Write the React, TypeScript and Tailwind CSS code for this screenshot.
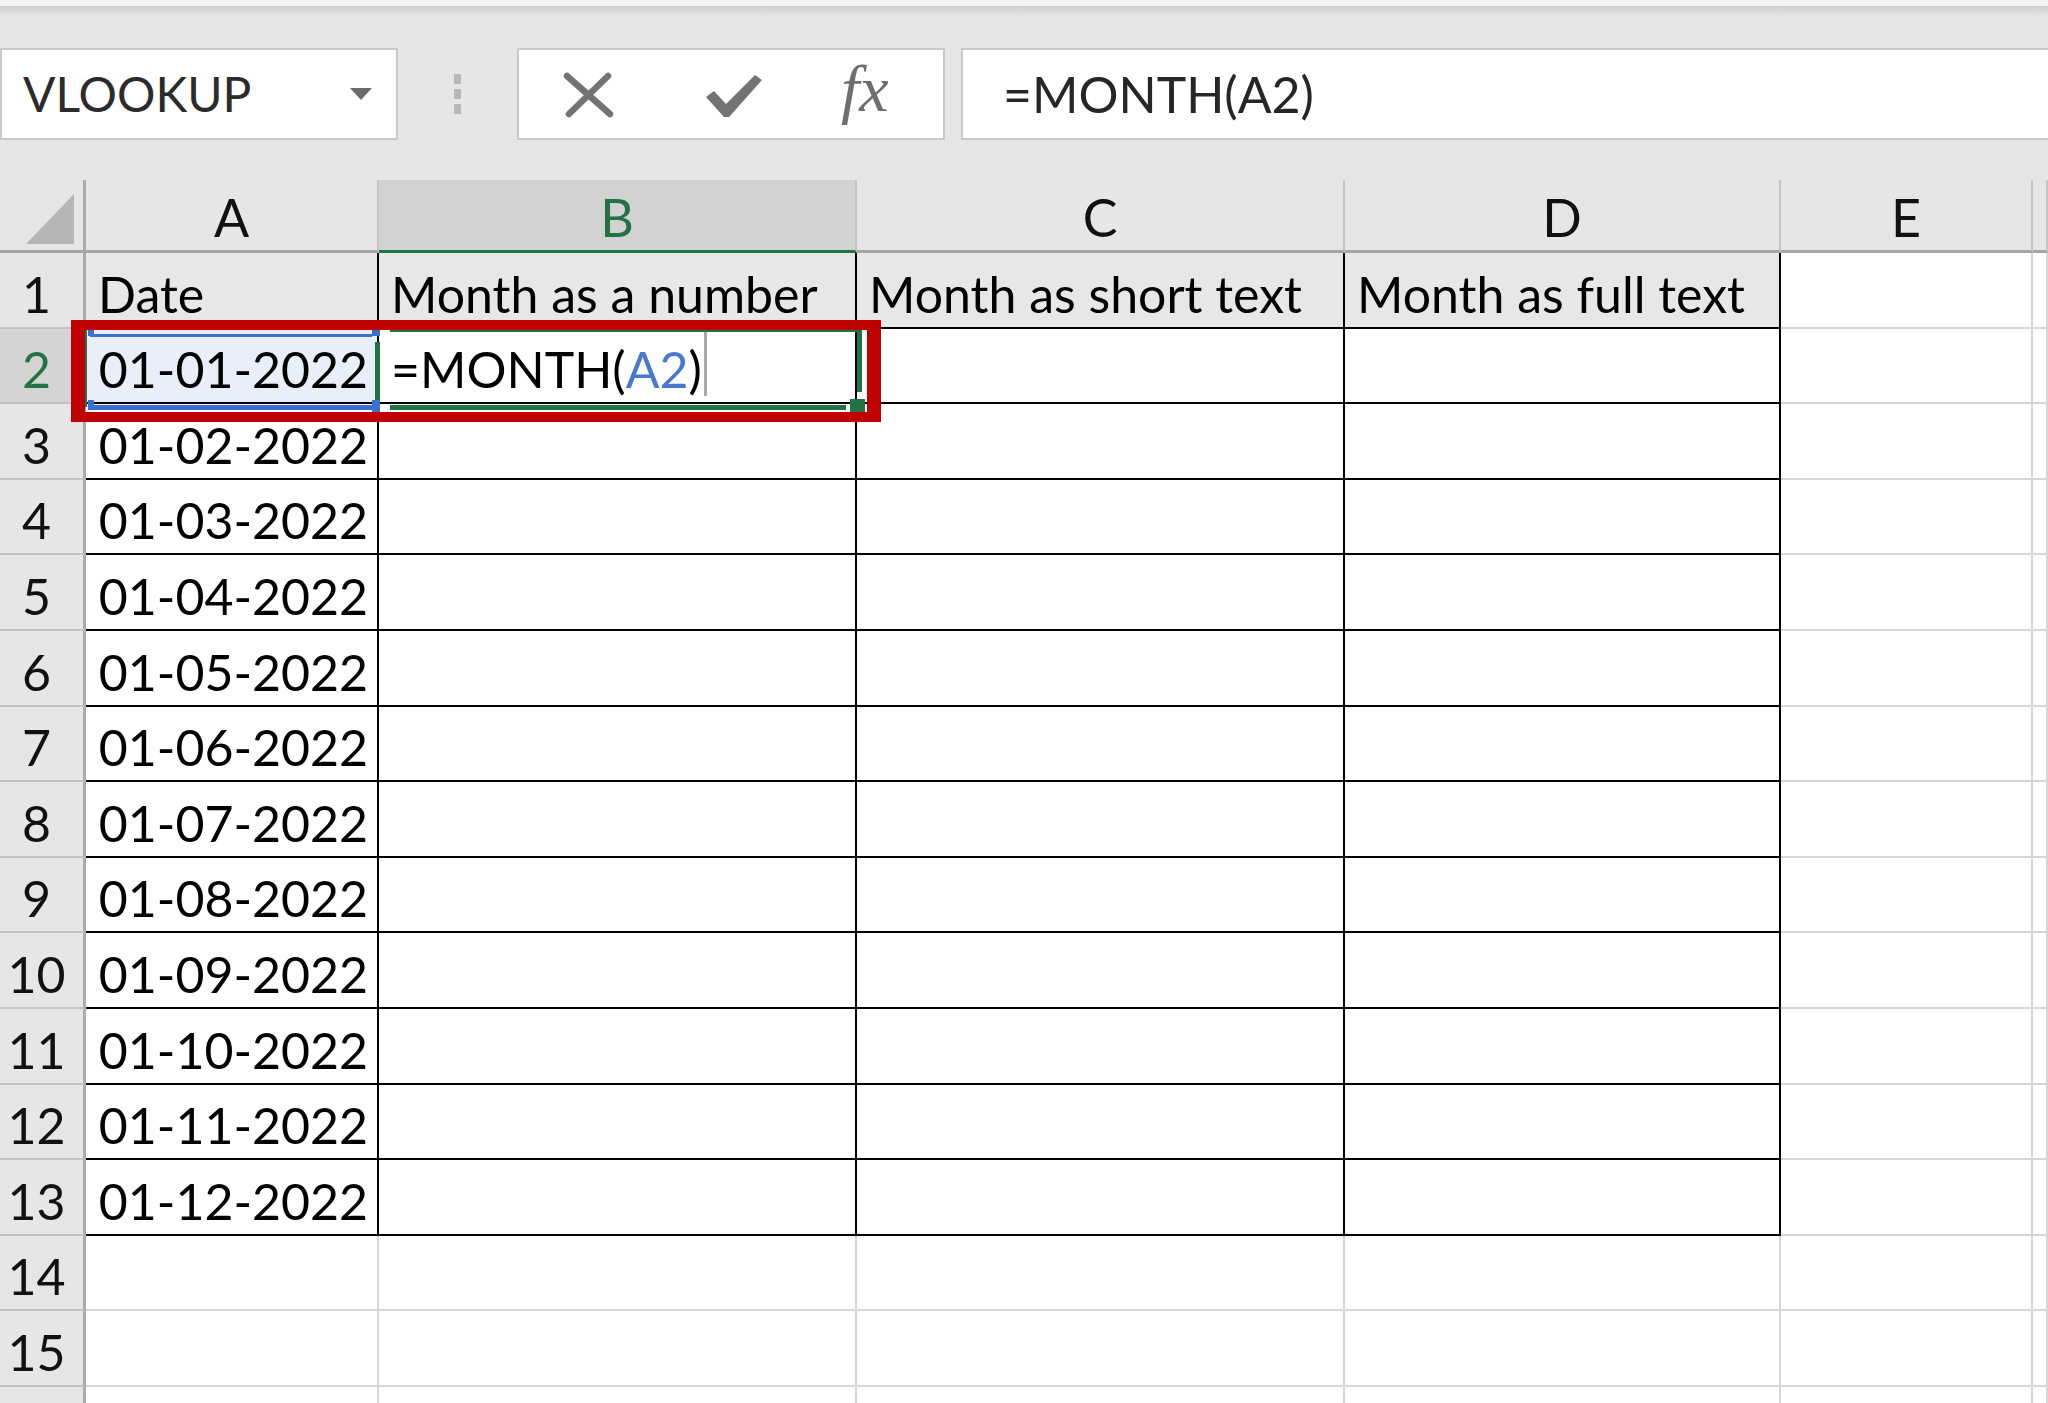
import React from 'react';

// column widths of the sheet (A..E, then the clipped F)
const colW = ['w-[293px]', 'w-[478px]', 'w-[488px]', 'w-[436px]', 'w-[252px]', 'flex-1'];
const letters = ['A', 'B', 'C', 'D', 'E', ''];
const headers = ['Date', 'Month as a number', 'Month as short text', 'Month as full text'];
const dates = [
  '01-01-2022', '01-02-2022', '01-03-2022', '01-04-2022', '01-05-2022', '01-06-2022',
  '01-07-2022', '01-08-2022', '01-09-2022', '01-10-2022', '01-11-2022', '01-12-2022',
];

function FormulaBar() {
  return (
    <div className="flex h-[92px] items-stretch">
      {/* name box */}
      <div className="relative flex w-[398px] items-center border-2 border-[#c9c9c9] bg-white pl-[21px]">
        <span className="text-[48px] leading-none text-[#2b2b2b]">VLOOKUP</span>
        <svg className="absolute left-[347px] top-[37px]" width="24" height="14" viewBox="0 0 24 14">
          <polygon points="1,1 23,1 12,13" fill="#6b6b6b" />
        </svg>
      </div>

      {/* grip */}
      <div className="flex w-[119px] flex-col items-center justify-center gap-[5px]">
        <div className="h-[10px] w-[7px] bg-[#b8b8b8]" />
        <div className="h-[10px] w-[7px] bg-[#b8b8b8]" />
        <div className="h-[10px] w-[7px] bg-[#b8b8b8]" />
      </div>

      {/* cancel / enter / fx */}
      <div className="relative w-[428px] border-2 border-[#c9c9c9] bg-white">
        <svg className="absolute left-[44px] top-[22px]" width="52" height="46" viewBox="0 0 52 46">
          <path d="M4 4 L47 42 M45 4 L6 42" stroke="#737373" strokeWidth="6.5" strokeLinecap="round" fill="none" />
        </svg>
        <svg className="absolute left-[186px] top-[22px]" width="58" height="48" viewBox="0 0 58 48">
          <polygon points="1,25 9,19 21,32 50,3 57,8 24,45 19,45" fill="#737373" />
        </svg>
        <span className="absolute left-[322px] top-[6px] font-['Liberation_Serif',serif] text-[66px] italic leading-none text-[#6e6e6e]">
          fx
        </span>
      </div>

      <div className="w-[16px]" />

      {/* formula input */}
      <div className="flex flex-1 items-center border-2 border-r-0 border-[#c9c9c9] bg-white pl-[40px]">
        <span className="text-[50px] leading-none text-[#262626]">=MONTH(A2)</span>
      </div>
    </div>
  );
}

function HeaderRow() {
  return (
    <div className="flex h-[73px]">
      <div className="relative w-[86px] border-r-[3px] border-b-[3px] border-r-[#ababab] border-b-[#a5a5a5]">
        <svg className="absolute left-[26px] top-[14px]" width="48" height="50" viewBox="0 0 48 50">
          <polygon points="48,0 48,50 0,50" fill="#b6b6b6" />
        </svg>
      </div>
      {letters.map((l, i) => (
        <div
          key={i}
          className={
            colW[i] +
            ' flex items-center justify-center pt-[4px] text-[52px] leading-none ' +
            (i === 1
              ? 'border-r-2 border-b-[3px] border-r-[#c4c4c4] border-b-[#217346] bg-[#d2d2d2] text-[#217346]'
              : 'border-r-2 border-b-[3px] border-r-[#c4c4c4] border-b-[#a5a5a5] text-[#111]')
          }
        >
          {l}
        </div>
      ))}
    </div>
  );
}

function SheetRow({ n }: { n: number }) {
  const inTable = n <= 13;
  const active = n === 2;
  return (
    <div className="flex h-[75.6px]">
      <div
        className={
          'flex w-[86px] items-end justify-center border-r-[3px] border-b-2 border-r-[#ababab] border-b-[#c2c2c2] pb-[8px] pr-[10px] text-[50px] leading-none ' +
          (active ? 'bg-[#d4d4d4] text-[#217346]' : 'bg-[#e6e6e6] text-[#111]')
        }
      >
        {n <= 15 ? n : null}
      </div>
      {colW.map((w, i) => {
        const black = inTable && i < 4;
        const fill = n === 1 && i < 4;
        let cls = w + ' flex items-end overflow-hidden whitespace-nowrap pb-[8px] text-[50px] leading-none text-black ';
        cls += black ? 'border-r-2 border-b-2 border-black ' : 'border-r-2 border-b-2 border-[#d6d6d6] ';
        if (fill) cls += 'bg-[#e7e7e7] ';
        else if (active && i === 0) cls += 'bg-[#e9eef8] ';
        else cls += 'bg-white ';
        let content: React.ReactNode = null;
        if (n === 1 && i < 4) {
          cls += 'pl-[12px]';
          content = headers[i];
        } else if (n >= 2 && n <= 13 && i === 0) {
          cls += 'justify-end pr-[9px]';
          content = dates[n - 2];
        } else if (active && i === 1) {
          cls += 'pl-[12px]';
          content = (
            <>
              =MONTH(<span className="text-[#4a78d0]">A2</span>)
              <span className="mb-[-2px] ml-[2px] inline-block h-[68px] w-[3px] bg-[#a8a8a8]" />
            </>
          );
        }
        return (
          <div key={i} className={cls}>
            {content}
          </div>
        );
      })}
    </div>
  );
}

export default function App() {
  const rows = Array.from({ length: 16 }, (_, i) => i + 1);
  return (
    <div className="h-[1403px] w-[2048px] overflow-hidden bg-[#e6e6e6] font-['Lato','Open_Sans',sans-serif]">
      <div className="h-[6px] bg-[#f3f3f3]" />
      <div className="h-[10px] bg-gradient-to-b from-[#cfcfcf] to-[#e4e4e4]" />
      <div className="pt-[32px]">
        <FormulaBar />
      </div>
      <div className="h-[40px]" />

      <div className="relative">
        <HeaderRow />
        {rows.map((n) => (
          <SheetRow key={n} n={n} />
        ))}

        {/* reference highlight on A2 */}
        <div className="absolute left-[82px] top-[150px] h-[77px] w-[5px] bg-[#217346]" />
        <div className="absolute left-[90px] top-[154px] h-[3px] w-[282px] bg-[#3b6fd1]" />
        <div className="absolute left-[90px] top-[225px] h-[5px] w-[282px] bg-[#3b6fd1]" />
        <div className="absolute left-[88px] top-[150px] h-[6px] w-[6px] bg-[#3b6fd1]" />
        <div className="absolute left-[88px] top-[220px] h-[10px] w-[6px] bg-[#3b6fd1]" />
        <div className="absolute left-[372px] top-[150px] h-[6px] w-[8px] bg-[#3b6fd1]" />
        <div className="absolute left-[372px] top-[220px] h-[12px] w-[8px] bg-[#3b6fd1]" />

        {/* active cell B2 */}
        <div className="absolute left-[375px] top-[162px] h-[58px] w-[5px] bg-[#217346]" />
        <div className="absolute left-[390px] top-[149px] h-[3px] w-[470px] bg-[#217346]" />
        <div className="absolute left-[390px] top-[225px] h-[5px] w-[456px] bg-[#217346]" />
        <div className="absolute left-[857px] top-[149px] h-[63px] w-[5px] bg-[#217346]" />
        <div className="absolute left-[850px] top-[219px] h-[13px] w-[15px] bg-[#217346]" />

        {/* red annotation box */}
        <div className="absolute left-[71px] top-[140px] h-[102px] w-[810px] border-x-[14px] border-y-[10px] border-[#c00000]" />
      </div>
    </div>
  );
}
